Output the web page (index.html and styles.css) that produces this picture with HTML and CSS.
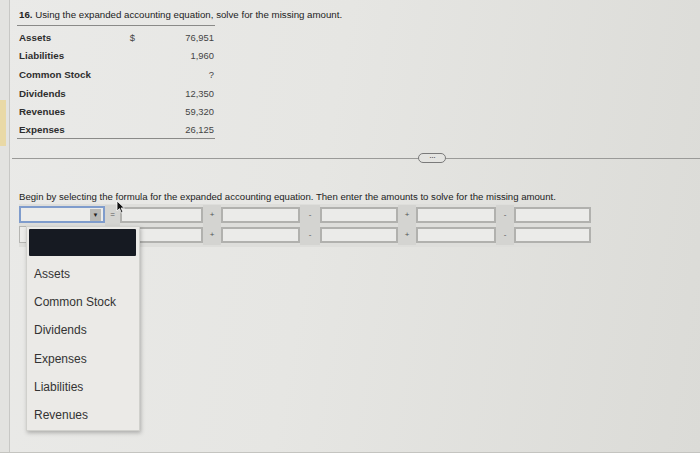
FILE: index.html
```html
<!DOCTYPE html>
<html lang="en">
<head>
  <meta charset="UTF-8">
  <title>Expanded Accounting Equation</title>
  <link rel="stylesheet" href="styles.css">
</head>
<body>
  <div class="screen">
    <div class="gutter"><div class="mark"></div></div>
    <div class="page">
      <p class="question"><strong>16.</strong> Using the expanded accounting equation, solve for the missing amount.</p>

      <table class="data">
        <tr><td class="label">Assets</td><td class="cur">$</td><td class="num">76,951</td></tr>
        <tr><td class="label">Liabilities</td><td class="cur"></td><td class="num">1,960</td></tr>
        <tr><td class="label">Common Stock</td><td class="cur"></td><td class="num">?</td></tr>
        <tr><td class="label">Dividends</td><td class="cur"></td><td class="num">12,350</td></tr>
        <tr><td class="label">Revenues</td><td class="cur"></td><td class="num">59,320</td></tr>
        <tr><td class="label">Expenses</td><td class="cur"></td><td class="num">26,125</td></tr>
      </table>

      <div class="divider">
        <span class="more">&middot;&middot;&middot;</span>
      </div>

      <p class="instruction">Begin by selecting the formula for the expanded accounting equation. Then enter the amounts to solve for the missing amount.</p>

      <div class="equation">
        <div class="cell select-cell">
          <div class="select focused"><span class="arrow">&#9660;</span></div>
          <div class="dropdown">
            <div class="dropdown-head"></div>
            <ul>
              <li>Assets</li>
              <li>Common Stock</li>
              <li>Dividends</li>
              <li>Expenses</li>
              <li>Liabilities</li>
              <li>Revenues</li>
            </ul>
          </div>
        </div>
        <div class="op">=</div>
        <div class="cell"><div class="box"></div></div>
        <div class="op">+</div>
        <div class="cell"><div class="box"></div></div>
        <div class="op">-</div>
        <div class="cell"><div class="box"></div></div>
        <div class="op">+</div>
        <div class="cell"><div class="box"></div></div>
        <div class="op">-</div>
        <div class="cell"><div class="box"></div></div>

        <div class="cell"><div class="select"><span class="arrow">&#9660;</span></div></div>
        <div class="op"></div>
        <div class="cell"><div class="box"></div></div>
        <div class="op">+</div>
        <div class="cell"><div class="box"></div></div>
        <div class="op">-</div>
        <div class="cell"><div class="box"></div></div>
        <div class="op">+</div>
        <div class="cell"><div class="box"></div></div>
        <div class="op">-</div>
        <div class="cell"><div class="box"></div></div>

        <svg class="pointer" width="9" height="14" viewBox="0 0 9 14">
          <path d="M1 1 L1 11 L3.5 8.6 L5.4 13 L7 12.3 L5.2 8 L8.4 8 Z" fill="#111" stroke="#fff" stroke-width="0.8"/>
        </svg>
      </div>
    </div>
  </div>
</body>
</html>
```

FILE: styles.css
```css
/* page frame */
body {
  margin: 0;
  font-family: 'Liberation Sans', Arial, sans-serif;
  color: #222;
  background: linear-gradient(100deg, #eaeae8 0%, #e6e6e3 45%, #dbdbd7 100%);
}
.screen {
  display: flex;
  height: 452px;
  border-bottom: 1px solid #c4c4c0;
  overflow: hidden;
}
.gutter {
  width: 9px;
  flex-shrink: 0;
  background: #e3e3e0;
  border-right: 1px solid #c8c8c5;
}
.mark {
  margin-top: 100px;
  width: 6px;
  height: 46px;
  background: #e9d9a6;
}
.page {
  flex: 1;
  padding: 9px 0 0 9px;
}

/* question */
.question {
  margin: 0 0 4px 0;
  font-size: 9.7px;
  line-height: 12px;
  color: #222;
}
.data {
  width: 198px;
  margin-left: -2px;
  border-collapse: collapse;
  border-top: 1px solid #8a8a88;
  border-bottom: 1px solid #8a8a88;
  font-size: 9.4px;
}
.data td {
  height: 18.6px;
  padding: 0;
  vertical-align: middle;
}
.data tr:first-child td {
  padding-top: 2px;
}
.data tr:last-child td {
  height: 17px;
}
.label {
  font-weight: bold;
  font-size: 9.8px;
  padding-left: 2px !important;
  color: #2e2e2e;
}
.cur {
  width: 40px;
  color: #444;
}
.num {
  text-align: right;
  padding-right: 1px !important;
  color: #444;
}

/* separator with ellipsis pill */
.divider {
  margin: 19px 0 0 -7px;
  height: 1px;
  background: #9a9a98;
  position: relative;
}
.more {
  position: absolute;
  left: 406px;
  top: -5px;
  width: 26px;
  height: 8px;
  border: 1px solid #7a7a7a;
  border-radius: 5px;
  background: #e4e4e1;
  font-size: 9px;
  line-height: 7px;
  text-align: center;
  color: #555;
  letter-spacing: -1px;
}

.instruction {
  margin: 32px 0 0 0;
  font-size: 9.6px;
  line-height: 11px;
  color: #222;
}

/* equation grid */
.equation {
  position: relative;
  display: grid;
  grid-template-columns: 86px 15px 83px 18px 79px 20px 78px 18px 80px 18px 77px;
  grid-template-rows: 20px 20px;
  width: 572px;
  margin-top: 2px;
  padding: 1px 0 2px;
  background: #dededb;
}
.cell {
  position: relative;
  display: flex;
  align-items: center;
}
.box {
  width: 100%;
  height: 16px;
  box-sizing: border-box;
  border: 2px solid #b1b1ae;
  background: #ebebe9;
}
.op {
  display: flex;
  align-items: center;
  justify-content: center;
  background: #d4d4d1;
  font-size: 8px;
  color: #555;
}
.select {
  width: 100%;
  height: 17px;
  box-sizing: border-box;
  border: 1px solid #b5b5b2;
  background: #ececea;
  display: flex;
  justify-content: flex-end;
  align-items: center;
  padding-right: 2px;
}
.select.focused {
  border: 2px solid #7f9ccc;
}
.arrow {
  width: 11px;
  height: 12px;
  background: #b9b9b6;
  color: #222;
  font-size: 6px;
  line-height: 12px;
  text-align: center;
}
.pointer {
  position: absolute;
  left: 97px;
  top: -4px;
}

/* open dropdown menu */
.dropdown {
  position: absolute;
  left: 7px;
  top: 21px;
  z-index: 2;
  width: 114px;
  height: 205px;
  box-sizing: border-box;
  padding: 2px;
  background: #ebeae7;
  border: 1px solid #d0d0cc;
  box-shadow: 1px 2px 4px rgba(0, 0, 0, 0.25);
}
.dropdown-head {
  width: 107px;
  height: 27px;
  background: #161a22;
  border-radius: 1px;
}
.dropdown ul {
  list-style: none;
  margin: 0;
  padding: 10px 0 0 5px;
}
.dropdown li {
  height: 28.2px;
  line-height: 16px;
  font-size: 12px;
  color: #333;
}
```
